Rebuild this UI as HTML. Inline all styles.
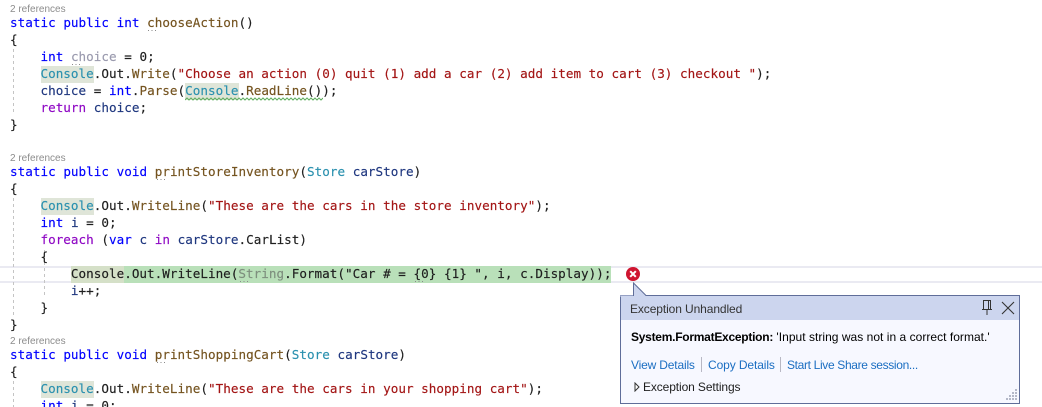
<!DOCTYPE html>
<html>
<head>
<meta charset="utf-8">
<style>
html,body{margin:0;padding:0;background:#fff;}
#w{position:relative;width:1042px;height:407px;overflow:hidden;background:#fff;}
.l{position:absolute;left:10px;margin:0;height:17px;line-height:17px;white-space:pre;font-family:"DejaVu Sans Mono","Liberation Mono",monospace;font-size:12.62px;letter-spacing:.022px;-webkit-text-stroke:.15px;color:#1e1e1e;}
.r{position:absolute;left:10px;font-family:"Liberation Sans",sans-serif;font-size:10px;line-height:12px;color:#8c8c8c;}
.k{color:#0000ff}.c{color:#8f08c4}.t{color:#2b91af}.m{color:#74531f}.s{color:#a31515}.v{color:#1f377f}.u{color:#9a9aae}
.b{position:absolute;}
.d{position:absolute;width:10px;height:1px;background:repeating-linear-gradient(90deg,#8a8a8a 0 1px,transparent 1px 3.5px);}
.g{position:absolute;width:1px;background:repeating-linear-gradient(180deg,#c4c4c4 0 3px,transparent 3px 6px);}
.p{position:absolute;font-family:"Liberation Sans",sans-serif;font-size:12px;line-height:16px;white-space:pre;color:#1e1e1e;}
.a{color:#1b6ec2}
</style>
</head>
<body>
<div id="w">
<!-- highlights -->
<div class="b" style="left:0;top:266px;width:1042px;height:2px;background:#eaeaf2"></div>
<div class="b" style="left:0;top:281px;width:1042px;height:2px;background:#eaeaf2"></div>
<div class="b" style="left:41px;top:66px;width:53px;height:17px;background:#dfe5d8"></div>
<div class="b" style="left:185px;top:83px;width:54px;height:17px;background:#dfe5d8"></div>
<div class="b" style="left:41px;top:198px;width:53px;height:17px;background:#dfe5d8"></div>
<div class="b" style="left:41px;top:381px;width:53px;height:17px;background:#dfe5d8"></div>
<div class="b" style="left:71px;top:266px;width:53px;height:17px;background:#d5e0c8"></div>
<div class="b" style="left:124px;top:266px;width:487px;height:17px;background:#b9e0b9"></div>
<!-- guides -->
<div class="g" style="left:13px;top:49px;height:66px"></div>
<div class="g" style="left:13px;top:198px;height:118px"></div>
<div class="g" style="left:44px;top:250px;height:48px"></div>
<div class="g" style="left:13px;top:381px;height:26px"></div>
<!-- code -->
<div class="r" style="top:4px">2 references</div>
<pre class="l" style="top:14px"><span class="k">static</span> <span class="k">public</span> <span class="k">int</span> <span class="m">chooseAction</span>()</pre>
<pre class="l" style="top:31px">{</pre>
<pre class="l" style="top:48px">    <span class="k">int</span> <span class="u">choice</span> = 0;</pre>
<pre class="l" style="top:65px">    <span class="t">Console</span>.Out.<span class="m">Write</span>(<span class="s">"Choose an action (0) quit (1) add a car (2) add item to cart (3) checkout "</span>);</pre>
<pre class="l" style="top:82px">    <span class="v">choice</span> = <span class="k">int</span>.<span class="m">Parse</span>(<span class="t">Console</span>.<span class="m">ReadLine</span>());</pre>
<pre class="l" style="top:99px">    <span class="c">return</span> <span class="v">choice</span>;</pre>
<pre class="l" style="top:116px">}</pre>
<div class="r" style="top:153px">2 references</div>
<pre class="l" style="top:163px"><span class="k">static</span> <span class="k">public</span> <span class="k">void</span> <span class="m">printStoreInventory</span>(<span class="t">Store</span> <span class="v">carStore</span>)</pre>
<pre class="l" style="top:180px">{</pre>
<pre class="l" style="top:197px">    <span class="t">Console</span>.Out.<span class="m">WriteLine</span>(<span class="s">"These are the cars in the store inventory"</span>);</pre>
<pre class="l" style="top:214px">    <span class="k">int</span> <span class="v">i</span> = 0;</pre>
<pre class="l" style="top:231px">    <span class="c">foreach</span> (<span class="k">var</span> <span class="v">c</span> <span class="c">in</span> <span class="v">carStore</span>.CarList)</pre>
<pre class="l" style="top:248px">    {</pre>
<pre class="l" style="top:265px">        Console.Out.WriteLine(<span style="color:#7e8f7e">String</span>.Format("Car # = {0} {1} ", i, c.Display));</pre>
<pre class="l" style="top:282px">        <span class="v">i</span>++;</pre>
<pre class="l" style="top:299px">    }</pre>
<pre class="l" style="top:316px">}</pre>
<div class="r" style="top:336px">2 references</div>
<pre class="l" style="top:346px"><span class="k">static</span> <span class="k">public</span> <span class="k">void</span> <span class="m">printShoppingCart</span>(<span class="t">Store</span> <span class="v">carStore</span>)</pre>
<pre class="l" style="top:363px">{</pre>
<pre class="l" style="top:380px">    <span class="t">Console</span>.Out.<span class="m">WriteLine</span>(<span class="s">"These are the cars in your shopping cart"</span>);</pre>
<pre class="l" style="top:397px">    <span class="k">int</span> <span class="v">i</span> = 0;</pre>
<!-- suggestion dots -->
<div class="d" style="left:148px;top:30px"></div>
<div class="d" style="left:72px;top:64px"></div>
<div class="d" style="left:157px;top:179px"></div>
<div class="d" style="left:240px;top:281px"></div>
<div class="d" style="left:415px;top:281px"></div>
<div class="d" style="left:157px;top:362px"></div>
<!-- squiggle -->
<svg class="b" style="left:185px;top:97px" width="138" height="4" viewBox="0 0 138 4">
<path d="M0 3 L2 1 L4 3 L6 1 L8 3 L10 1 L12 3 L14 1 L16 3 L18 1 L20 3 L22 1 L24 3 L26 1 L28 3 L30 1 L32 3 L34 1 L36 3 L38 1 L40 3 L42 1 L44 3 L46 1 L48 3 L50 1 L52 3 L54 1 L56 3 L58 1 L60 3 L62 1 L64 3 L66 1 L68 3 L70 1 L72 3 L74 1 L76 3 L78 1 L80 3 L82 1 L84 3 L86 1 L88 3 L90 1 L92 3 L94 1 L96 3 L98 1 L100 3 L102 1 L104 3 L106 1 L108 3 L110 1 L112 3 L114 1 L116 3 L118 1 L120 3 L122 1 L124 3 L126 1 L128 3 L130 1 L132 3 L134 1 L136 3 L138 1" fill="none" stroke="#5fae5f" stroke-width="1"/>
</svg>
<!-- error icon -->
<svg class="b" style="left:625px;top:266px" width="16" height="16" viewBox="0 0 16 16">
<circle cx="8" cy="8" r="7" fill="#cf1530"/>
<path d="M5.2 5.2 L10.8 10.8 M10.8 5.2 L5.2 10.8" stroke="#fff" stroke-width="2" fill="none"/>
</svg>
<!-- popup -->
<div class="b" style="left:620px;top:295px;width:398px;height:107px;border:1px solid #5f6d99;background:#f7f8ff"></div>
<div class="b" style="left:621px;top:296px;width:398px;height:24px;background:#ccd5ee"></div>
<svg class="b" style="left:620px;top:282px" width="28" height="16" viewBox="0 0 28 16">
<path d="M13.5 1 L13.5 13.5 L0 13.5 L0 14.5 L27 14.5 L25 13.5 Z" fill="#ccd5ee" stroke="none"/>
<path d="M13.5 14 L13.5 1 L26 13.5" fill="#ccd5ee" stroke="#5f6d99" stroke-width="1"/>
</svg>
<div class="p" style="left:630px;top:301px;color:#333;letter-spacing:-.1px">Exception Unhandled</div>
<div class="p" style="left:631px;top:329px;color:#000"><b style="letter-spacing:-.26px">System.FormatException:</b><span style="letter-spacing:.03px"> 'Input string was not in a correct format.'</span></div>
<div class="p a" style="left:631px;top:357px;letter-spacing:-.17px">View Details</div>
<div class="b" style="left:701px;top:357px;width:1px;height:15px;background:#b8b8c4"></div>
<div class="p a" style="left:708px;top:357px;letter-spacing:-.1px">Copy Details</div>
<div class="b" style="left:780px;top:357px;width:1px;height:15px;background:#b8b8c4"></div>
<div class="p a" style="left:787px;top:357px;letter-spacing:-.34px">Start Live Share session...</div>
<svg class="b" style="left:634px;top:382px" width="6" height="10" viewBox="0 0 6 10"><path d="M1 1 L5 5 L1 9 Z" fill="#fff" stroke="#333" stroke-width="1"/></svg>
<div class="p" style="left:643px;top:379px;color:#1e1e1e;letter-spacing:-.11px">Exception Settings</div>
<!-- pin -->
<svg class="b" style="left:980px;top:299px" width="14" height="18" viewBox="0 0 14 18">
<path d="M3.5 1.5 H10.5 V10.5 H3.5 Z M2 10.5 H12 M7 10.5 V16" fill="none" stroke="#333" stroke-width="1"/>
<path d="M8.5 1.5 V10" stroke="#333" stroke-width="1"/>
</svg>
<!-- close -->
<svg class="b" style="left:1001px;top:301px" width="14" height="14" viewBox="0 0 14 14">
<path d="M1 1 L13 13 M13 1 L1 13" stroke="#333" stroke-width="1.1" fill="none"/>
</svg>
<!-- grip -->
<svg class="b" style="left:1006px;top:389px" width="12" height="12" viewBox="0 0 12 12" fill="#b4b8c8">
<rect x="9" y="0" width="2" height="2"/>
<rect x="6" y="3" width="2" height="2"/><rect x="9" y="3" width="2" height="2"/>
<rect x="3" y="6" width="2" height="2"/><rect x="6" y="6" width="2" height="2"/><rect x="9" y="6" width="2" height="2"/>
<rect x="0" y="9" width="2" height="2"/><rect x="3" y="9" width="2" height="2"/><rect x="6" y="9" width="2" height="2"/><rect x="9" y="9" width="2" height="2"/>
</svg>
</div>
</body>
</html>
